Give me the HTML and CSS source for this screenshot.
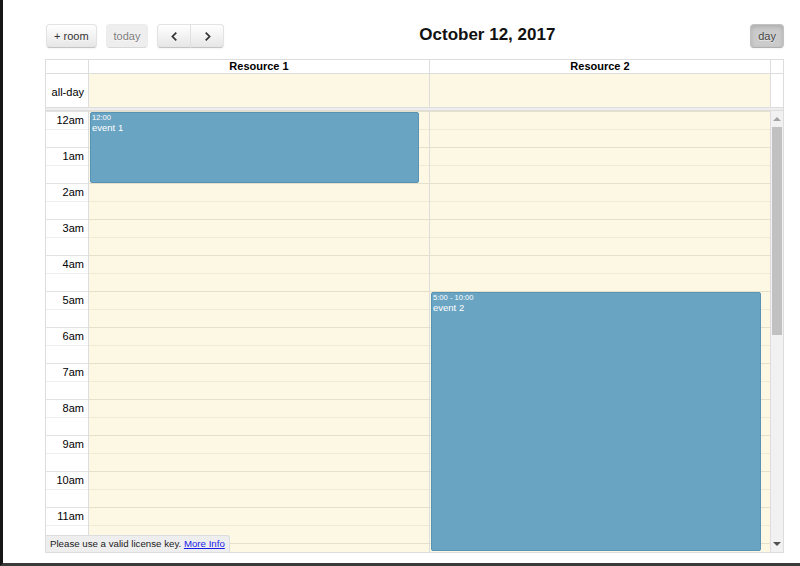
FILE: index.html
```html
<!DOCTYPE html>
<html>
<head>
<meta charset="utf-8">
<title>Calendar</title>
<link rel="stylesheet" href="styles.css">
</head>
<body>
<div class="screen">
  <div class="cal">
    <div class="toolbar">
      <div class="tb-left">
        <button class="btn">+ room</button>
        <button class="btn disabled">today</button>
        <div class="btn-group">
          <button class="btn icon prev"><svg width="7" height="9" viewBox="0 0 7 9"><polyline points="5.3,0.6 1.4,4.5 5.3,8.4" fill="none" stroke="#333" stroke-width="1.7"/></svg></button>
          <button class="btn icon next"><svg width="7" height="9" viewBox="0 0 7 9"><polyline points="1.7,0.6 5.6,4.5 1.7,8.4" fill="none" stroke="#333" stroke-width="1.7"/></svg></button>
        </div>
      </div>
      <div class="tb-center"><h2 class="title">October 12, 2017</h2></div>
      <div class="tb-right"><button class="btn active">day</button></div>
    </div>

    <div class="view">
      <div class="row head">
        <div class="cell"></div>
        <div class="cell">Resource 1</div>
        <div class="cell">Resource 2</div>
        <div class="cell"></div>
      </div>
      <div class="row allday">
        <div class="cell axis-label">all-day</div>
        <div class="cell res"></div>
        <div class="cell res"></div>
        <div class="cell"></div>
      </div>
      <div class="divider"></div>
      <div class="body">
        <div class="axis-col">
          <div class="slot hour"><span>12am</span></div><div class="slot minor"></div>
          <div class="slot hour"><span>1am</span></div><div class="slot minor"></div>
          <div class="slot hour"><span>2am</span></div><div class="slot minor"></div>
          <div class="slot hour"><span>3am</span></div><div class="slot minor"></div>
          <div class="slot hour"><span>4am</span></div><div class="slot minor"></div>
          <div class="slot hour"><span>5am</span></div><div class="slot minor"></div>
          <div class="slot hour"><span>6am</span></div><div class="slot minor"></div>
          <div class="slot hour"><span>7am</span></div><div class="slot minor"></div>
          <div class="slot hour"><span>8am</span></div><div class="slot minor"></div>
          <div class="slot hour"><span>9am</span></div><div class="slot minor"></div>
          <div class="slot hour"><span>10am</span></div><div class="slot minor"></div>
          <div class="slot hour"><span>11am</span></div><div class="slot minor"></div>
          <div class="slot hour"></div>
        </div>
        <div class="res-col">
          <div class="event ev1">
            <div class="ev-time">12:00</div>
            <div class="ev-title">event 1</div>
          </div>
        </div>
        <div class="res-col">
          <div class="event ev2">
            <div class="ev-time">5:00 - 10:00</div>
            <div class="ev-title">event 2</div>
          </div>
        </div>
        <div class="scrollbar">
          <div class="sb-btn"><span class="tri-up"></span></div>
          <div class="sb-track"><div class="sb-thumb"></div></div>
          <div class="sb-btn"><span class="tri-down"></span></div>
        </div>
      </div>
      <div class="license">Please use a valid license key. <a href="#">More Info</a></div>
    </div>
  </div>
</div>
</body>
</html>
```

FILE: styles.css
```css
* { box-sizing: border-box; }
html, body { margin: 0; padding: 0; background: #fff; }
body {
  font-family: "Liberation Sans", Arial, sans-serif;
  font-size: 11px;
  color: #000;
}
.screen {
  width: 800px;
  height: 566px;
  border-left: 3px solid #161616;
  border-bottom: 3px solid #3a3a3a;
  padding: 24px 0 0 42px;
  overflow: hidden;
}
.cal { width: 739px; }

/* toolbar */
.toolbar {
  display: flex;
  align-items: flex-start;
  height: 24px;
  margin-bottom: 11px;
}
.tb-left { display: flex; gap: 9px; padding-left: 1px; }
.tb-center { flex: 1; text-align: center; }
.tb-right { display: flex; }
.title {
  margin: 0;
  font-size: 17px;
  line-height: 22px;
  font-weight: bold;
  color: #111;
}
.btn {
  height: 24px;
  margin: 0;
  padding: 0 7px;
  font: 11px/22px "Liberation Sans", Arial, sans-serif;
  color: #333;
  background-color: #f5f5f5;
  background-image: linear-gradient(#fff, #e6e6e6);
  border: 1px solid;
  border-color: #e3e3e3 #e3e3e3 #c4c4c4;
  border-radius: 4px;
  box-shadow: inset 0 1px 0 rgba(255,255,255,.2), 0 1px 2px rgba(0,0,0,.05);
  text-shadow: 0 1px 1px rgba(255,255,255,.75);
}
.btn.disabled {
  background-image: none;
  background-color: #e6e6e6;
  opacity: .65;
  box-shadow: none;
}
.btn.active {
  background-image: none;
  background-color: #cbcbcb;
  color: #444;
  border-color: #c2c2c2 #c2c2c2 #b0b0b0;
  box-shadow: inset 0 2px 4px rgba(0,0,0,.15), 0 1px 2px rgba(0,0,0,.05);
}
.btn-group { display: flex; }
.btn.icon {
  display: flex;
  align-items: center;
  justify-content: center;
  padding: 0;
}
.btn.prev { width: 34px; border-radius: 4px 0 0 4px; }
.btn.next { width: 33px; border-radius: 0 4px 4px 0; border-left-width: 0; }

/* view */
.view {
  position: relative;
  border: 1px solid #ddd;
}
.row {
  display: grid;
  grid-template-columns: 42px 341px 341px 13px;
}
.row .cell + .cell { border-left: 1px solid #ddd; }
.head .cell {
  line-height: 13px;
  height: 14px;
  font-weight: bold;
  text-align: center;
  border-bottom: 1px solid #ddd;
}
.allday .cell { height: 33px; }
.allday .res { background: #fcf8e3; }
.axis-label {
  display: flex;
  align-items: center;
  justify-content: flex-end;
  padding: 2px 4px 0 0;
}
.divider {
  height: 4px;
  background: #eee;
  border-top: 1px solid #ddd;
  border-bottom: 1px solid #ddd;
}

.body {
  display: grid;
  grid-template-columns: 42px 341px 341px 13px;
  grid-template-rows: 441px;
  height: 441px;
  overflow: hidden;
}
.body > * { min-height: 0; overflow: hidden; }
.body > * + * { border-left: 1px solid #ddd; }

.axis-col { display: flex; flex-direction: column; }
.slot {
  flex: none;
  height: 18px;
  border-top: 1px solid #e2e2e2;
  text-align: right;
  padding-right: 4px;
  line-height: 17px;
}
.slot.minor { border-top-color: #eeeeee; }

.res-col {
  position: relative;
  background-color: #fcf8e3;
  background-image: repeating-linear-gradient(to bottom,
    #e5e0ca 0, #e5e0ca 1px,
    transparent 1px, transparent 18px,
    #efead4 18px, #efead4 19px,
    transparent 19px, transparent 36px);
}

.event {
  position: absolute;
  left: 1px;
  background: #6aa4c3;
  border: 1px solid #5892b4;
  border-radius: 2px;
  color: #fff;
  padding: 0 1px;
  overflow: hidden;
}
.ev1 { top: 1px; height: 71px; right: 10px; }
.ev2 { top: 181px; height: 259px; right: 9px; }
.ev-time { font-size: 7.6px; line-height: 9px; }
.ev-title { font-size: 9.5px; line-height: 11px; }

/* scrollbar */
.scrollbar {
  display: flex;
  flex-direction: column;
  background: #f1f1f1;
}
.sb-btn {
  flex: none;
  height: 16px;
  display: flex;
  align-items: center;
  justify-content: center;
}
.tri-up {
  width: 0; height: 0;
  border-left: 4px solid transparent;
  border-right: 4px solid transparent;
  border-bottom: 4px solid #a3a3a3;
}
.tri-down {
  width: 0; height: 0;
  border-left: 4px solid transparent;
  border-right: 4px solid transparent;
  border-top: 4px solid #505050;
}
.sb-track { flex: 1; padding: 0 1px; }
.sb-thumb {
  height: 208px;
  background: #c1c1c1;
}

/* license */
.license {
  position: absolute;
  left: 0;
  bottom: 0;
  z-index: 5;
  background: #eee;
  border-style: solid;
  border-color: #ddd;
  border-width: 1px 1px 0 0;
  border-top-right-radius: 3px;
  padding: 2px 4px;
  font-size: 9.7px;
  line-height: 12px;
  color: #222;
}
.license a { color: #1a1ae6; text-decoration: underline; }
```
